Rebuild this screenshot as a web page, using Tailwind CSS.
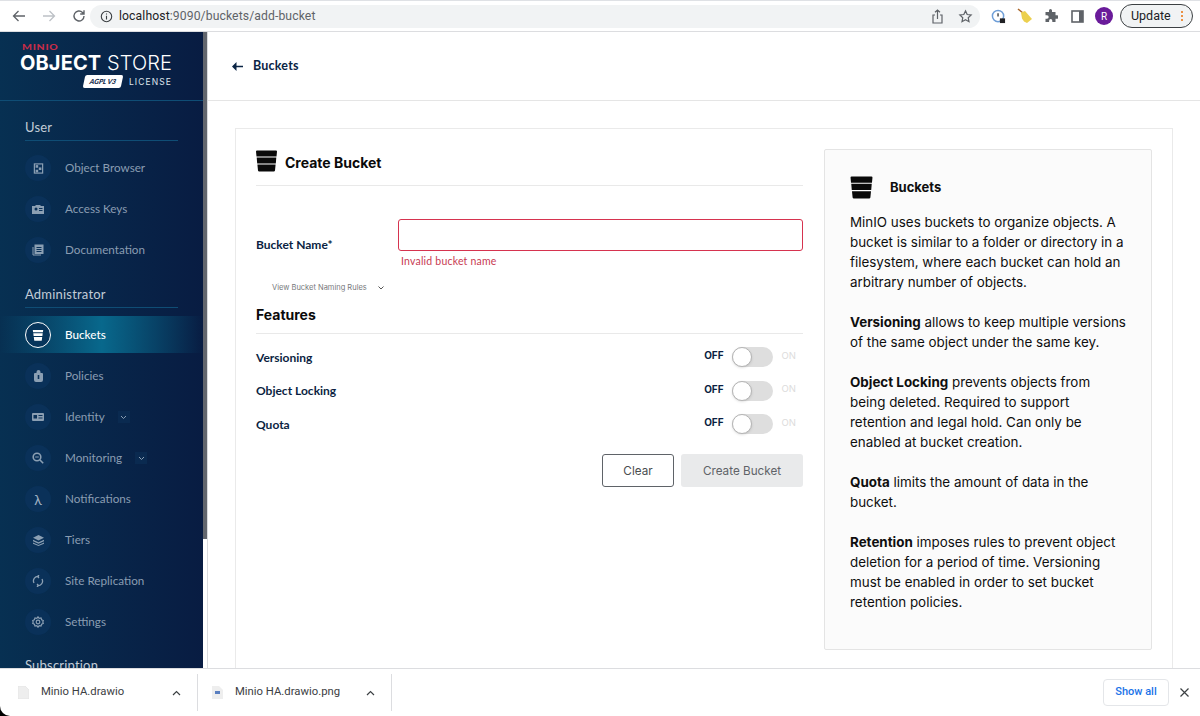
<!DOCTYPE html>
<html lang="en">
<head>
<meta charset="UTF-8">
<title>MinIO Console</title>
<script src="https://cdn.jsdelivr.net/npm/@tailwindcss/browser@4"></script>
</head>
<body class="w-[1200px] h-[716px] overflow-hidden flex flex-col bg-black font-['Inter',sans-serif]">

<!-- browser toolbar -->
<div class="h-8 shrink-0 flex items-center bg-white border-b border-[#dcdde0] border-t-[1px] border-t-[#dfe1e5]">
  <div class="w-[90px] flex items-center pl-[11px] gap-[14px] text-[#5f6368]">
    <svg class="w-4 h-4" viewBox="0 0 16 16" fill="none" stroke="#5f6368" stroke-width="1.3"><path d="M14 8H3M7.5 3 2.5 8l5 5"/></svg>
    <svg class="w-4 h-4" viewBox="0 0 16 16" fill="none" stroke="#bdc1c6" stroke-width="1.3"><path d="M2 8h11M8.5 3l5 5-5 5"/></svg>
    <svg class="w-4 h-4" viewBox="0 0 16 16" fill="none" stroke="#5f6368" stroke-width="1.4"><path d="M13 8a5 5 0 1 1-1.5-3.6L13 6M13 2.2V6H9.2"/></svg>
  </div>
  <div class="w-[890px] h-[23px] rounded-full bg-[#f1f3f4] flex items-center pl-[10px] pr-[7px]">
    <svg class="w-[13px] h-[13px] mr-[6px]" viewBox="0 0 14 14" fill="none" stroke="#3c4043" stroke-width="1.2"><circle cx="7" cy="7" r="5.6"/><path d="M7 6.2v4M7 3.8v1.1"/></svg>
    <span class="text-[12.2px] tracking-[0.1px] font-['Roboto',sans-serif] text-[#202124]">localhost<span class="text-[#5f6368]">:9090/buckets/add-bucket</span></span>
    <svg class="w-[13px] h-[15px] ml-auto" viewBox="0 0 13 15" fill="none" stroke="#5f6368" stroke-width="1.2"><path d="M4 6H2v8h9V6H9M6.5 10V1M4 3.2 6.5 1 9 3.2"/></svg>
    <svg class="w-[15px] h-[15px] ml-[14px]" viewBox="0 0 16 16" fill="none" stroke="#5f6368" stroke-width="1.3"><path d="m8 2 1.8 3.9 4.2.5-3.1 2.9.8 4.2L8 11.4l-3.7 2.1.8-4.2L2 6.4l4.2-.5z"/></svg>
  </div>
  <svg class="w-[15px] h-[15px] ml-[11px]" viewBox="0 0 16 16" fill="none"><circle cx="7.5" cy="7.5" r="6" stroke="#6f9fd8" stroke-width="1.6"/><path d="M7.5 4.5v3.5" stroke="#3c4043" stroke-width="1.5"/><rect x="9.5" y="10" width="5.5" height="5" fill="#202124"/></svg>
  <svg class="w-[16px] h-[16px] ml-[11px]" viewBox="0 0 16 16"><path d="M1 1l5 4" stroke="#a9662a" stroke-width="1.6"/><path d="M4 4.500 8 3l7 8-5 4-3-1.500-2-3z" fill="#ecd04f"/></svg>
  <svg class="w-[14px] h-[14px] ml-[11px]" viewBox="0 0 14 14" fill="#5f6368"><path d="M5 1.5a1.5 1.5 0 0 1 3 0V3h3.5v3.3H13a1.6 1.6 0 0 1 0 3.4h-1.5V13H8.300v-1.300a1.600 1.600 0 0 0-3.200 0V13H1.500V9.700H3a1.600 1.600 0 0 0 0-3.400H1.500V3H5z"/></svg>
  <svg class="w-[13px] h-[13px] ml-[13px]" viewBox="0 0 13 13"><rect x="1" y="1" width="11" height="11" fill="none" stroke="#5f6368" stroke-width="1.600"/><rect x="8" y="1" width="4" height="11" fill="#5f6368"/></svg>
  <div class="w-[18px] h-[18px] ml-[11px] rounded-full bg-[#6a1b9a] text-white text-[10px] flex items-center justify-center font-['Roboto',sans-serif]">R</div>
  <div class="w-[73px] h-[24px] ml-[7px] rounded-full border border-[#3c4043] bg-[#f1f3f4] flex items-center pl-[10px] text-[12.500px] text-[#202124] font-['Roboto',sans-serif]">Update<span class="ml-[10px] flex flex-col gap-[2px]"><i class="block w-[2px] h-[2px] rounded-full bg-[#e8710a]"></i><i class="block w-[2px] h-[2px] rounded-full bg-[#e8710a]"></i><i class="block w-[2px] h-[2px] rounded-full bg-[#e8710a]"></i></span></div>
</div>

<div class="flex-1 flex min-h-0 bg-white">
  <!-- sidebar -->
  <aside class="w-[203px] shrink-0 overflow-hidden bg-gradient-to-r from-[#073052] to-[#081c42] font-['Lato',sans-serif]">
    <div class="h-[69px] border-b border-[#0f4d75] flex flex-col items-end pr-[31px] pt-[11px] relative">
      <div class="absolute left-[22px] top-[11px] origin-left scale-x-[1.3] text-[8px] leading-[9px] font-black tracking-[0.6px] text-[#c72c48]">MINIO</div>
      <div class="mt-[9px] text-[20px] leading-[22px] text-white tracking-[0.1px] whitespace-nowrap font-['Inter',sans-serif]"><b class="font-bold">OBJECT</b> <span class="font-light">STORE</span></div>
      <div class="flex items-center gap-[7px] mt-[1px]">
        <span class="w-[38px] h-[13px] bg-white rounded-[2px] -skew-x-12 text-[#12284a] text-[7px] leading-[13px] font-black italic text-center">AGPL V3</span>
        <span class="text-[8.500px] leading-[12px] tracking-[1.100px] text-[#dfe5ec] font-['Inter',sans-serif]">LICENSE</span>
      </div>
    </div>

    <div class="px-[25px] pt-[17px]">
      <div class="text-[13px] leading-[18px] tracking-[0.200px] text-[#c2ccd7] pb-[4px] border-b border-[#0f4d75]">User</div>
    </div>
    <nav class="mt-[14px] flex flex-col gap-[15px] px-[25px]">
      <div class="h-[26px] flex items-center"><span class="w-[26px] h-[26px] rounded-full bg-[#0a3159] flex items-center justify-center"><svg class="w-[11px] h-[11px]" viewBox="0 0 12 12" fill="none" stroke="#8b9fb3" stroke-width="1.300"><rect x="1.500" y="1" width="9" height="10"/><rect x="3.500" y="3" width="1.500" height="1.500" fill="#8b9fb3"/><rect x="7" y="5.500" width="1.500" height="1.500" fill="#8b9fb3"/><rect x="3.500" y="8" width="1.500" height="1.500" fill="#8b9fb3"/></svg></span><span class="ml-[14px] text-[11.700px] text-[#8a9db2]">Object Browser</span></div>
      <div class="h-[26px] flex items-center"><span class="w-[26px] h-[26px] rounded-full bg-[#0a3159] flex items-center justify-center"><svg class="w-[12px] h-[10px]" viewBox="0 0 12 10" fill="#8b9fb3"><path d="M0 2h3l1-1h4l1 1h3v8H0z"/><circle cx="4" cy="5" r="1.500" fill="#0a3159"/><rect x="7" y="4" width="3.500" height="1" fill="#0a3159"/><rect x="7" y="6" width="3.500" height="1" fill="#0a3159"/></svg></span><span class="ml-[14px] text-[11.700px] text-[#8a9db2]">Access Keys</span></div>
      <div class="h-[26px] flex items-center"><span class="w-[26px] h-[26px] rounded-full bg-[#0a3159] flex items-center justify-center"><svg class="w-[12px] h-[12px]" viewBox="0 0 12 12" fill="none" stroke="#8b9fb3"><rect x="3" y="1" width="8" height="8.500" fill="#8b9fb3"/><path d="M1 3v8h8" /><path d="M4.500 3.500h5M4.500 5.500h5M4.500 7.500h5" stroke="#0a3159"/></svg></span><span class="ml-[14px] text-[11.700px] text-[#8a9db2]">Documentation</span></div>
    </nav>

    <div class="px-[25px] pt-[22px]">
      <div class="text-[13px] leading-[18px] tracking-[0.200px] text-[#c2ccd7] pb-[4px] border-b border-[#0f4d75]">Administrator</div>
    </div>

    <div class="mt-[8px] h-[37px] flex items-center pl-[25px] bg-gradient-to-r from-transparent via-[#08688c] to-transparent">
      <span class="w-[26px] h-[26px] rounded-full border border-white bg-[#07355b] flex items-center justify-center"><svg class="w-[12px] h-[12px]" viewBox="0 0 12 12" fill="#fff"><path d="M.8 1h10.400l-.3 2.300H1.100zM1.300 4.200h9.400l-.3 2.800H1.600zM1.800 8h8.400l-.4 3.200a.6.6 0 0 1-.6.500H2.800a.6.6 0 0 1-.6-.5z"/></svg></span>
      <span class="ml-[14px] text-[11.700px] text-white font-medium">Buckets</span>
    </div>

    <nav class="mt-[10px] flex flex-col gap-[15px] px-[25px]">
      <div class="h-[26px] flex items-center"><span class="w-[26px] h-[26px] rounded-full bg-[#0a3159] flex items-center justify-center"><svg class="w-[9px] h-[12px]" viewBox="0 0 9 12" fill="#8b9fb3"><path d="M2.500 3V2a2 2 0 0 1 4 0v1H8a1 1 0 0 1 1 1v6a2 2 0 0 1-2 2H2a2 2 0 0 1-2-2V4a1 1 0 0 1 1-1z"/><rect x="3.700" y="5" width="1.600" height="4" fill="#0a3159"/></svg></span><span class="ml-[14px] text-[11.700px] text-[#8a9db2]">Policies</span></div>
      <div class="h-[26px] flex items-center"><span class="w-[26px] h-[26px] rounded-full bg-[#0a3159] flex items-center justify-center"><svg class="w-[12px] h-[10px]" viewBox="0 0 12 10" fill="#8b9fb3"><rect y="1" width="12" height="8" rx="1"/><rect x="1.500" y="3" width="3.500" height="3.500" fill="#0a3159"/><rect x="6.500" y="3" width="4" height="1" fill="#0a3159"/><rect x="6.500" y="5.500" width="4" height="1" fill="#0a3159"/></svg></span><span class="ml-[14px] text-[11.700px] text-[#8a9db2]">Identity</span><span class="ml-[13px] w-[12px] h-[12px] bg-[#0a2a50] flex items-center justify-center"><svg class="w-[7px] h-[5px]" viewBox="0 0 7 5" fill="none" stroke="#8b9fb3"><path d="m1 1 2.500 2.500L6 1"/></svg></span></div>
      <div class="h-[26px] flex items-center"><span class="w-[26px] h-[26px] rounded-full bg-[#0a3159] flex items-center justify-center"><svg class="w-[12px] h-[12px]" viewBox="0 0 12 12" fill="none" stroke="#8b9fb3" stroke-width="1.600"><circle cx="5" cy="5" r="3.800"/><path d="m8 8 3.200 3.200"/><path d="M3.200 5h3.600" stroke-width="1"/></svg></span><span class="ml-[14px] text-[11.700px] text-[#8a9db2]">Monitoring</span><span class="ml-[13px] w-[12px] h-[12px] bg-[#0a2a50] flex items-center justify-center"><svg class="w-[7px] h-[5px]" viewBox="0 0 7 5" fill="none" stroke="#8b9fb3"><path d="m1 1 2.500 2.500L6 1"/></svg></span></div>
      <div class="h-[26px] flex items-center"><span class="w-[26px] h-[26px] rounded-full bg-[#0a3159] flex items-center justify-center text-[#9fb0c2] text-[14px]">λ</span><span class="ml-[14px] text-[11.700px] text-[#8a9db2]">Notifications</span></div>
      <div class="h-[26px] flex items-center"><span class="w-[26px] h-[26px] rounded-full bg-[#0a3159] flex items-center justify-center"><svg class="w-[11px] h-[11px]" viewBox="0 0 12 12" fill="#8b9fb3"><path d="m6 0 6 3-6 3-6-3z"/><path d="M0 5.200 6 8l6-2.800v1.500L6 9.500 0 6.700zM0 8.200l6 2.800 6-2.800v1.300L6 12 0 9.500z"/></svg></span><span class="ml-[14px] text-[11.700px] text-[#8a9db2]">Tiers</span></div>
      <div class="h-[26px] flex items-center"><span class="w-[26px] h-[26px] rounded-full bg-[#0a3159] flex items-center justify-center"><svg class="w-[12px] h-[12px]" viewBox="0 0 12 12" fill="none" stroke="#8b9fb3" stroke-width="1.300"><path d="M2 8a4.500 4.500 0 0 1 5-6.500M10 4a4.500 4.500 0 0 1-5 6.500M7 0 5.500 1.500 7 3M5 9l1.500 1.500L5 12"/></svg></span><span class="ml-[14px] text-[11.700px] text-[#8a9db2]">Site Replication</span></div>
      <div class="h-[26px] flex items-center"><span class="w-[26px] h-[26px] rounded-full bg-[#0a3159] flex items-center justify-center"><svg class="w-[12px] h-[12px]" viewBox="0 0 12 12" fill="none" stroke="#8b9fb3" stroke-width="1.200"><circle cx="6" cy="6" r="1.800"/><path d="M6 .8 7.200 2.300 9 1.900l.6 1.800 1.700.8-.5 1.500.5 1.500-1.700.8L9 10.100l-1.800-.4L6 11.200 4.800 9.700 3 10.100l-.6-1.800-1.700-.8.5-1.500-.5-1.500 1.700-.8L3 1.900l1.800.4z"/></svg></span><span class="ml-[14px] text-[11.700px] text-[#8a9db2]">Settings</span></div>
    </nav>

    <div class="px-[25px] pt-[21px] text-[13px] leading-[18px] tracking-[0.200px] text-[#c2ccd7]">Subscription</div>
  </aside>

  <!-- sidebar scrollbar -->
  <div class="w-[5px] shrink-0 flex flex-col border-r border-[#d9dbde]">
    <div class="h-[507px] bg-[#62666d]"></div>
    <div class="flex-1 bg-white"></div>
  </div>

  <!-- page -->
  <main class="flex-1 min-w-0 overflow-hidden bg-white">
    <div class="h-[69px] border-b border-[#e5e5e5] flex items-center pl-[24px] pt-[1px]">
      <svg class="w-[11px] h-[9px]" viewBox="0 0 11 9" fill="#0b2545"><path d="M4.500 0 0 4.500 4.500 9V5.300H11V3.700H4.500z"/></svg>
      <span class="ml-[10px] text-[12.500px] font-bold font-['Lato',sans-serif] tracking-[0.2px] text-[#0b2545]">Buckets</span>
    </div>

    <div class="ml-[27px] mt-[27px] w-[938px] h-[600px] border border-[#eaeaea] flex pl-[20px] pt-[20px]">
      <!-- form -->
      <div class="w-[547px]">
        <div class="flex items-center h-[37px] pb-[10px] border-b border-[#e9e9e9]">
          <svg class="w-[21px] h-[22px] -mt-[2px]" viewBox="0 0 21 22" fill="#0a0a0a"><path d="M0 1.500Q0 .5 1 .5h19q1 0 1 1L20.500 6.500H.5zM.7 7.500h19.600l-.5 6H1.200zM1.400 14.500h18.200l-.6 6q-.2 1-1.200 1H3.200q-1 0-1.200-1z"/></svg>
          <span class="ml-[8px] text-[14px] font-bold text-[#0a0a0a]">Create Bucket</span>
        </div>

        <div class="mt-[33px] flex">
          <label class="w-[142px] pt-[18px] text-[12px] leading-[16px] font-bold font-['Lato',sans-serif] text-[#0b1f42]">Bucket Name*</label>
          <div class="flex-1">
            <div class="h-[32px] rounded-[3px] border border-[#d6334f] bg-white"></div>
            <div class="mt-[3px] pl-[3px] text-[10.500px] leading-[14px] font-['Lato',sans-serif] text-[#c83b52] tracking-[0.2px]">Invalid bucket name</div>
          </div>
        </div>

        <div class="mt-[15px] pl-[16px] flex items-center text-[7.500px] leading-[10px] text-[#77797c]">View Bucket Naming Rules
          <svg class="ml-[11px] w-[6px] h-[4px]" viewBox="0 0 6 4" fill="none" stroke="#555"><path d="m.5.5 2.500 2.500L5.500.5"/></svg>
        </div>

        <div class="mt-[13px] pb-[10px] border-b border-[#e9e9e9] text-[14px] leading-[17px] font-bold text-[#0a0a0a]">Features</div>

        <div class="mt-[7px] flex flex-col">
          <div class="h-[33.500px] flex items-center">
            <span class="text-[12px] font-bold font-['Lato',sans-serif] text-[#0b1f42]">Versioning</span>
            <span class="ml-auto text-[10px] font-bold text-[#0b1f42] -mt-[4px]">OFF</span>
            <span class="ml-[8px] w-[41px] h-[20px] -mt-[1px] rounded-full bg-[#dedede] relative"><i class="absolute left-0 top-0 w-[20px] h-[20px] rounded-full bg-white border border-[#b5b5b5] shadow-sm"></i></span>
            <span class="ml-[9px] mr-[7px] text-[9.500px] text-[#dcdcdc] -mt-[4px]">ON</span>
          </div>
          <div class="h-[33.500px] flex items-center">
            <span class="text-[12px] font-bold font-['Lato',sans-serif] text-[#0b1f42]">Object Locking</span>
            <span class="ml-auto text-[10px] font-bold text-[#0b1f42] -mt-[4px]">OFF</span>
            <span class="ml-[8px] w-[41px] h-[20px] -mt-[1px] rounded-full bg-[#dedede] relative"><i class="absolute left-0 top-0 w-[20px] h-[20px] rounded-full bg-white border border-[#b5b5b5] shadow-sm"></i></span>
            <span class="ml-[9px] mr-[7px] text-[9.500px] text-[#dcdcdc] -mt-[4px]">ON</span>
          </div>
          <div class="h-[33.500px] flex items-center">
            <span class="text-[12px] font-bold font-['Lato',sans-serif] text-[#0b1f42]">Quota</span>
            <span class="ml-auto text-[10px] font-bold text-[#0b1f42] -mt-[4px]">OFF</span>
            <span class="ml-[8px] w-[41px] h-[20px] -mt-[1px] rounded-full bg-[#dedede] relative"><i class="absolute left-0 top-0 w-[20px] h-[20px] rounded-full bg-white border border-[#b5b5b5] shadow-sm"></i></span>
            <span class="ml-[9px] mr-[7px] text-[9.500px] text-[#dcdcdc] -mt-[4px]">ON</span>
          </div>
        </div>

        <div class="mt-[12px] flex justify-end gap-[7px] text-[11.700px]">
          <button class="w-[72px] h-[33px] pt-[3px] rounded-[3px] border border-[#5f6368] text-[#4a4d50] bg-white">Clear</button>
          <button class="w-[122px] h-[33px] pt-[3px] rounded-[3px] bg-[#e9eaeb] text-[#5f6368]">Create Bucket</button>
        </div>
      </div>

      <!-- help box -->
      <div class="ml-[21px] w-[328px] h-[501px] border border-[#e4e4e4] rounded-[2px] bg-[#fbfbfb] pl-[25px] pr-[24px] pt-[25px] text-[13.400px] leading-[20px] text-[#0f0f0f]">
        <div class="flex items-center h-[24px]">
          <svg class="w-[23px] h-[23px]" viewBox="0 0 21 22" fill="#0a0a0a"><path d="M0 1.500Q0 .5 1 .5h19q1 0 1 1L20.500 6.500H.5zM.7 7.500h19.600l-.5 6H1.200zM1.400 14.500h18.200l-.6 6q-.2 1-1.200 1H3.200q-1 0-1.200-1z"/></svg>
          <b class="ml-[17px] text-[13px] font-bold">Buckets</b>
        </div>
        <p class="mt-[13px]">MinIO uses buckets to organize objects. A bucket is similar to a folder or directory in a filesystem, where each bucket can hold an arbitrary number of objects.</p>
        <p class="mt-[20px]"><b class="font-bold">Versioning</b> allows to keep multiple versions of the same object under the same key.</p>
        <p class="mt-[20px]"><b class="font-bold">Object Locking</b> prevents objects from being deleted. Required to support retention and legal hold. Can only be enabled at bucket creation.</p>
        <p class="mt-[20px]"><b class="font-bold">Quota</b> limits the amount of data in the bucket.</p>
        <p class="mt-[20px]"><b class="font-bold">Retention</b> imposes rules to prevent object deletion for a period of time. Versioning must be enabled in order to set bucket retention policies.</p>
      </div>
    </div>
  </main>
</div>

<!-- downloads bar -->
<div class="h-[48px] shrink-0 bg-white border-t border-[#dcdde0] rounded-bl-[10px] flex items-center text-[11.300px] font-['Roboto',sans-serif] text-[#3c4043]">
  <div class="w-[198px] h-[37px] border-r border-[#dcdde0] flex items-center pl-[18px]">
    <svg class="w-[11px] h-[13px]" viewBox="0 0 11 13" fill="#eeeeee" stroke="#dddddd" stroke-width=".5"><path d="M0 0h7l4 4v9H0z"/></svg>
    <span class="ml-[12px]">Minio HA.drawio</span>
    <svg class="ml-auto mr-[16px] w-[9px] h-[6px]" viewBox="0 0 9 6" fill="none" stroke="#3c4043" stroke-width="1.200"><path d="m1 5 3.500-3.500L8 5"/></svg>
  </div>
  <div class="w-[194px] h-[37px] border-r border-[#dcdde0] flex items-center pl-[14px]">
    <svg class="w-[11px] h-[13px]" viewBox="0 0 11 13"><path d="M0 0h7l4 4v9H0z" fill="#eeeeee"/><rect x="3" y="5" width="5" height="3" fill="#5a7fc0"/></svg>
    <span class="ml-[12px]">Minio HA.drawio.png</span>
    <svg class="ml-auto mr-[16px] w-[9px] h-[6px]" viewBox="0 0 9 6" fill="none" stroke="#3c4043" stroke-width="1.200"><path d="m1 5 3.500-3.500L8 5"/></svg>
  </div>
  <div class="ml-auto w-[66px] h-[27px] rounded-[4px] border border-[#e4e6e9] flex items-center justify-center text-[#1a73e8] font-medium text-[11px]">Show all</div>
  <svg class="ml-[11px] mr-[11px] w-[9px] h-[9px]" viewBox="0 0 9 9" fill="none" stroke="#3c4043" stroke-width="1.200"><path d="m.5.5 8 8M8.500.5l-8 8"/></svg>
</div>
</body>
</html>
